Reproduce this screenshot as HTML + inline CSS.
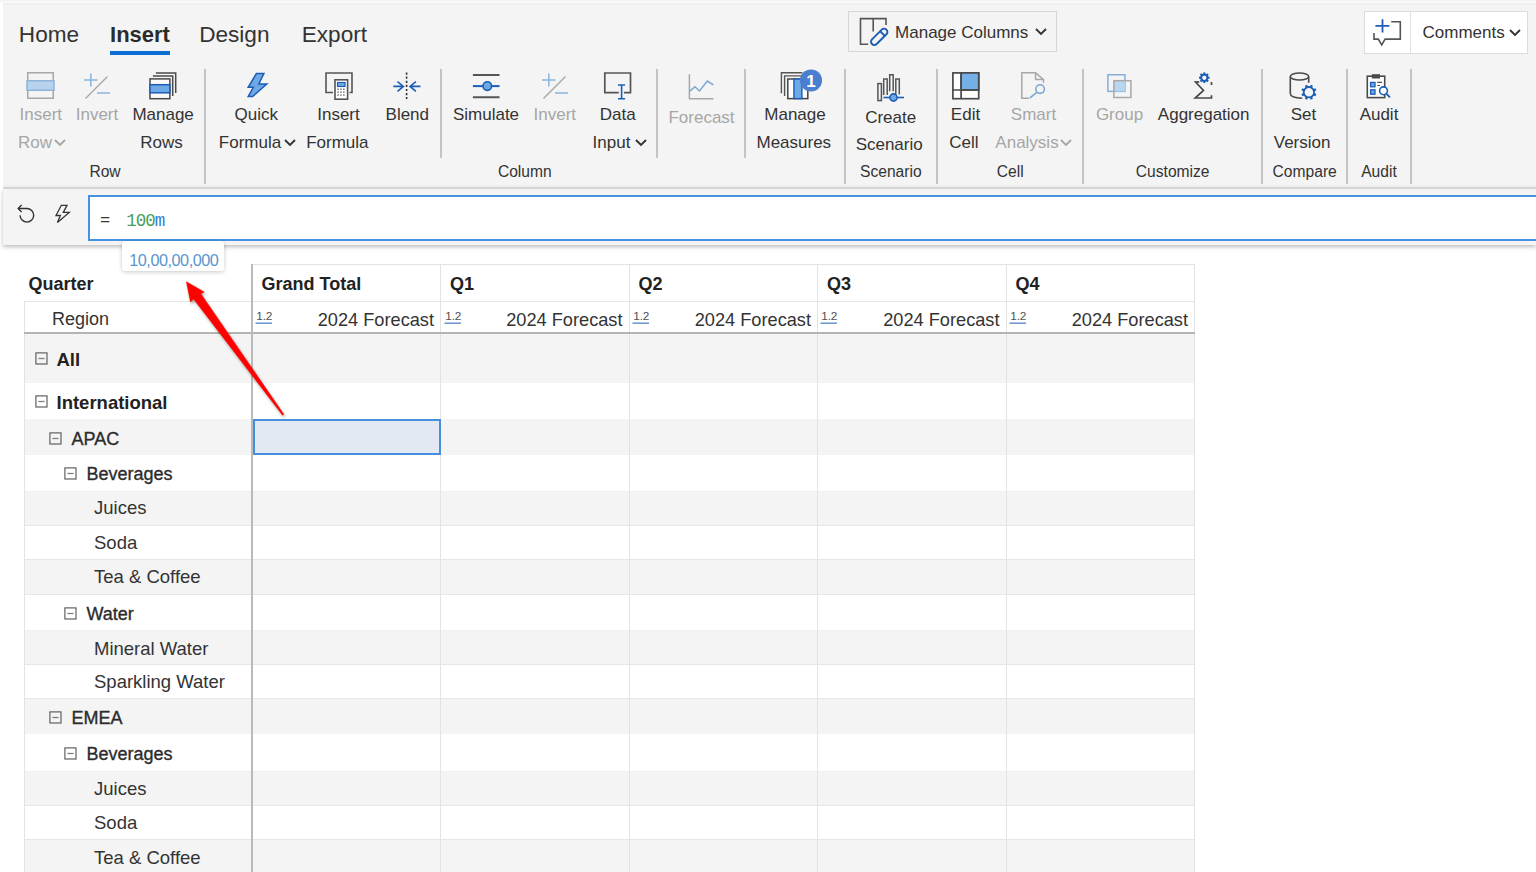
<!DOCTYPE html>
<html><head><meta charset="utf-8"><style>
html,body{margin:0;padding:0;}
body{width:1536px;height:872px;overflow:hidden;position:relative;background:#fff;font-family:"Liberation Sans",sans-serif;color:#333;}
.t{position:absolute;white-space:nowrap;line-height:1;}
</style></head><body>
<div style="position:absolute;left:0;top:0;width:1536px;height:1px;background:#f4f4f4"></div><div style="position:absolute;left:0;top:1px;width:1536px;height:2px;background:#f9f9f9"></div>
<div style="position:absolute;left:3px;top:3px;width:1533px;height:185px;background:#f4f4f4;"></div>
<div style="position:absolute;left:3px;top:3px;width:1533px;height:2px;background:#f0f0f0;"></div>
<div style="position:absolute;left:3px;top:184px;width:1533px;height:3px;background:linear-gradient(#f4f4f4,#ececec);"></div>
<div style="position:absolute;left:3px;top:187px;width:1533px;height:2px;background:#d9d9d9;"></div>
<div class="t" style="top:24px;font-size:22.6px;left:-101.00px;width:300px;text-align:center;">Home</div>
<div class="t" style="top:24px;font-size:22px;font-weight:700;color:#2b2b2b;left:-10.00px;width:300px;text-align:center;">Insert</div>
<div class="t" style="top:24px;font-size:22.6px;left:84.30px;width:300px;text-align:center;">Design</div>
<div class="t" style="top:24px;font-size:22.6px;left:184.40px;width:300px;text-align:center;">Export</div>
<div style="position:absolute;left:110px;top:51px;width:60px;height:4px;background:#0b6fd6;"></div>
<div style="position:absolute;left:848px;top:11px;width:209px;height:41px;border:1px solid #d6d6d6;box-sizing:border-box;"></div>
<svg style="position:absolute;left:860px;top:18px;overflow:visible" width="28" height="28" viewBox="0 0 28 28"><path d="M8.2 26.2 H0.5 V0.6 H26 V7" fill="none" stroke="#555555" stroke-width="1.6"/><path d="M13.2 0.6 V13.4" stroke="#555555" stroke-width="1.6"/><g transform="translate(19.2 18.8) rotate(-45)"><rect x="-10.2" y="-3.3" width="20.4" height="6.6" rx="3.3" fill="none" stroke="#1c5db5" stroke-width="1.9"/><path d="M4.6 -3.3 V3.3" stroke="#1c5db5" stroke-width="1.9"/></g></svg>
<div class="t" style="top:24px;font-size:17px;left:811.70px;width:300px;text-align:center;">Manage Columns</div>
<svg style="position:absolute;left:1035px;top:28px;overflow:visible" width="12" height="7" viewBox="0 0 12 7"><path d="M1 1 L6 6 L11 1" fill="none" stroke="#333333" stroke-width="1.9"/></svg>
<div style="position:absolute;left:1364px;top:11px;width:164px;height:43px;background:#fff;border:1px solid #dcdcdc;box-sizing:border-box;"></div>
<div style="position:absolute;left:1410px;top:12px;width:1px;height:41px;background:#e0e0e0;"></div>
<svg style="position:absolute;left:1373px;top:19px;overflow:visible" width="28" height="27" viewBox="0 0 28 27"><path d="M1 13.9 V20.1 H5.3 L8.7 26 L12.1 20.1 H27.3 V2.7 H18.2" fill="none" stroke="#555555" stroke-width="1.6"/><path d="M9.5 0.3 V13.6 M2.4 6.8 H16.4" stroke="#1c5db5" stroke-width="1.8"/></svg>
<div class="t" style="top:24px;font-size:17px;left:1313.60px;width:300px;text-align:center;">Comments</div>
<svg style="position:absolute;left:1509px;top:29px;overflow:visible" width="12" height="7" viewBox="0 0 12 7"><path d="M1 1 L6 6 L11 1" fill="none" stroke="#333333" stroke-width="1.9"/></svg>
<div style="position:absolute;left:204px;top:69px;width:2px;height:115px;background:#c4c4c4;"></div>
<div style="position:absolute;left:440px;top:69px;width:2px;height:89px;background:#c4c4c4;"></div>
<div style="position:absolute;left:656px;top:69px;width:2px;height:89px;background:#c4c4c4;"></div>
<div style="position:absolute;left:744px;top:69px;width:2px;height:89px;background:#c4c4c4;"></div>
<div style="position:absolute;left:844px;top:69px;width:2px;height:115px;background:#c4c4c4;"></div>
<div style="position:absolute;left:936px;top:69px;width:2px;height:115px;background:#c4c4c4;"></div>
<div style="position:absolute;left:1082px;top:69px;width:2px;height:115px;background:#c4c4c4;"></div>
<div style="position:absolute;left:1261px;top:69px;width:2px;height:115px;background:#c4c4c4;"></div>
<div style="position:absolute;left:1346px;top:69px;width:2px;height:115px;background:#c4c4c4;"></div>
<div style="position:absolute;left:1410px;top:69px;width:2px;height:115px;background:#c4c4c4;"></div>
<svg style="position:absolute;left:27px;top:72px;overflow:visible" width="27" height="27" viewBox="0 0 27 27"><rect x="0.75" y="0.75" width="25.5" height="25.5" fill="none" stroke="#a8a8a8" stroke-width="1.5"/><rect x="0" y="8.75" width="27" height="9.5" fill="#b7d3ee" stroke="#8fb3db" stroke-width="1.5"/></svg>
<div class="t" style="top:106px;font-size:17px;color:#a6a6a6;left:-109.20px;width:300px;text-align:center;">Insert</div>
<div class="t" style="top:134px;font-size:17px;color:#a6a6a6;left:-115.00px;width:300px;text-align:center;">Row</div>
<svg style="position:absolute;left:53.5px;top:139px;overflow:visible" width="12" height="7" viewBox="0 0 12 7"><path d="M1 1 L6 6 L11 1" fill="none" stroke="#a6a6a6" stroke-width="1.9"/></svg>
<svg style="position:absolute;left:84px;top:73px;overflow:visible" width="27" height="26" viewBox="0 0 27 26"><path d="M6.8 0.5 V13.5 M0 7 H13.5" stroke="#8db4dd" stroke-width="1.5"/><path d="M1.5 25.5 L23.5 3.5" stroke="#a8a8a8" stroke-width="1.5"/><path d="M13 20 H26" stroke="#8db4dd" stroke-width="1.5"/></svg>
<div class="t" style="top:106px;font-size:17px;color:#a6a6a6;left:-53.00px;width:300px;text-align:center;">Invert</div>
<svg style="position:absolute;left:149px;top:72px;overflow:visible" width="28" height="28" viewBox="0 0 28 28"><path d="M3.9 4 H23.7 V24 M6.9 1 H26.7 V21" fill="none" stroke="#4a4a4a" stroke-width="1.5"/><rect x="1" y="6.9" width="19.85" height="19.8" fill="#fafafa" stroke="#4a4a4a" stroke-width="1.5"/><rect x="1" y="12.7" width="19.85" height="8.1" fill="#6ea8e6" stroke="#1c5db5" stroke-width="1.5"/></svg>
<div class="t" style="top:106px;font-size:17px;left:13.10px;width:300px;text-align:center;">Manage</div>
<div class="t" style="top:134px;font-size:17px;left:11.50px;width:300px;text-align:center;">Rows</div>
<div class="t" style="top:164px;font-size:15.6px;left:-45.00px;width:300px;text-align:center;">Row</div>
<svg style="position:absolute;left:247px;top:73px;overflow:visible" width="21" height="25" viewBox="0 0 21 25"><path d="M9.4 0.6 H16.9 L11.8 11 H19.8 L5.6 23.6 H1.2 L6.3 14.3 H1.2 Z" fill="#6ea8e6" stroke="#1c5db5" stroke-width="1.5" stroke-linejoin="miter"/></svg>
<div class="t" style="top:106px;font-size:17px;left:106.20px;width:300px;text-align:center;">Quick</div>
<div class="t" style="top:134px;font-size:17px;left:100.00px;width:300px;text-align:center;">Formula</div>
<svg style="position:absolute;left:284px;top:139px;overflow:visible" width="12" height="7" viewBox="0 0 12 7"><path d="M1 1 L6 6 L11 1" fill="none" stroke="#333333" stroke-width="1.9"/></svg>
<svg style="position:absolute;left:325px;top:72px;overflow:visible" width="28" height="28" viewBox="0 0 28 28"><path d="M8 20.5 H1 V1 H27 V20.5 H24.5" fill="none" stroke="#555555" stroke-width="1.6"/><rect x="10" y="7.8" width="12.6" height="19.4" fill="#fff" stroke="#555555" stroke-width="1.6"/><rect x="12.5" y="10.5" width="7.5" height="4" fill="#6ea8e6" stroke="#1c5db5" stroke-width="1.2"/><rect x="12.3" y="16.5" width="1.5" height="1.5" fill="#777"/><rect x="12.3" y="19.4" width="1.5" height="1.5" fill="#777"/><rect x="12.3" y="22.3" width="1.5" height="1.5" fill="#777"/><rect x="15.2" y="16.5" width="1.5" height="1.5" fill="#777"/><rect x="15.2" y="19.4" width="1.5" height="1.5" fill="#777"/><rect x="15.2" y="22.3" width="1.5" height="1.5" fill="#777"/><rect x="18.1" y="16.5" width="1.5" height="1.5" fill="#777"/><rect x="18.1" y="19.4" width="1.5" height="1.5" fill="#777"/><rect x="18.1" y="22.3" width="1.5" height="1.5" fill="#777"/></svg>
<div class="t" style="top:106px;font-size:17px;left:188.50px;width:300px;text-align:center;">Insert</div>
<div class="t" style="top:134px;font-size:17px;left:187.40px;width:300px;text-align:center;">Formula</div>
<svg style="position:absolute;left:393px;top:72px;overflow:visible" width="28" height="28" viewBox="0 0 28 28"><path d="M13.6 0.5 V27" stroke="#333" stroke-width="1.6" stroke-dasharray="2.2 1.9"/><path d="M0.3 14.4 H10.4 M4.5 9.7 L10.4 14.4 L4.5 19.4" fill="none" stroke="#1c5db5" stroke-width="1.6"/><path d="M17 14.4 H27.5 M22.9 9.7 L17 14.4 L22.9 19.4" fill="none" stroke="#1c5db5" stroke-width="1.6"/></svg>
<div class="t" style="top:106px;font-size:17px;left:257.30px;width:300px;text-align:center;">Blend</div>
<svg style="position:absolute;left:472px;top:73px;overflow:visible" width="28" height="26" viewBox="0 0 28 26"><path d="M0.9 1.9 H27.5 M0.9 24.3 H27.5" stroke="#555" stroke-width="2"/><path d="M0.9 13.1 H27.5" stroke="#1c5db5" stroke-width="2"/><circle cx="15.3" cy="13.1" r="4.3" fill="#6ea8e6" stroke="#1c5db5" stroke-width="1.6"/></svg>
<div class="t" style="top:106px;font-size:17px;left:336.00px;width:300px;text-align:center;">Simulate</div>
<svg style="position:absolute;left:542px;top:73px;overflow:visible" width="27" height="26" viewBox="0 0 27 26"><path d="M6.8 0.5 V13.5 M0 7 H13.5" stroke="#8db4dd" stroke-width="1.5"/><path d="M1.5 25.5 L23.5 3.5" stroke="#a8a8a8" stroke-width="1.5"/><path d="M13 20 H26" stroke="#8db4dd" stroke-width="1.5"/></svg>
<div class="t" style="top:106px;font-size:17px;color:#a6a6a6;left:404.80px;width:300px;text-align:center;">Invert</div>
<svg style="position:absolute;left:604px;top:72px;overflow:visible" width="28" height="28" viewBox="0 0 28 28"><path d="M14.8 20.6 H0.8 V1 H26.5 V20.6 H19.9" fill="none" stroke="#555555" stroke-width="1.7"/><path d="M17.6 13 V26.7 M14 13 H21.1 M14 26.7 H21.1" stroke="#1c5db5" stroke-width="1.6"/></svg>
<div class="t" style="top:106px;font-size:17px;left:467.70px;width:300px;text-align:center;">Data</div>
<div class="t" style="top:134px;font-size:17px;left:461.50px;width:300px;text-align:center;">Input</div>
<svg style="position:absolute;left:634.5px;top:139px;overflow:visible" width="12" height="7" viewBox="0 0 12 7"><path d="M1 1 L6 6 L11 1" fill="none" stroke="#333333" stroke-width="1.9"/></svg>
<div class="t" style="top:164px;font-size:15.6px;left:374.80px;width:300px;text-align:center;">Column</div>
<svg style="position:absolute;left:688px;top:74px;overflow:visible" width="27" height="26" viewBox="0 0 27 26"><path d="M1.4 0.2 V24.7 H25.4" fill="none" stroke="#a8a8a8" stroke-width="1.5"/><path d="M1.5 17.4 L7 12.7 L11.5 17 L19.3 7 L25.4 10.9" fill="none" stroke="#7aa7d6" stroke-width="1.5"/></svg>
<div class="t" style="top:109px;font-size:17px;color:#a6a6a6;left:551.50px;width:300px;text-align:center;">Forecast</div>
<svg style="position:absolute;left:781px;top:69px;overflow:visible" width="42" height="31" viewBox="0 0 42 31"><path d="M0.4 24.2 V3.7 H21.4" fill="none" stroke="#555" stroke-width="1.4"/><path d="M3.6 26.9 V6.9 H21.4" fill="none" stroke="#555" stroke-width="1.4"/><rect x="6.8" y="10" width="20" height="19.6" fill="#fff" stroke="#444" stroke-width="1.5"/><rect x="12.9" y="10" width="8" height="19.6" fill="#6ea8e6" stroke="#1c5db5" stroke-width="1.4"/><circle cx="30" cy="11.4" r="11" fill="#4a7ecf"/><text x="30" y="17.6" text-anchor="middle" font-family="Liberation Sans" font-weight="700" font-size="17" fill="#fff">1</text></svg>
<div class="t" style="top:106px;font-size:17px;left:645.00px;width:300px;text-align:center;">Manage</div>
<div class="t" style="top:134px;font-size:17px;left:643.80px;width:300px;text-align:center;">Measures</div>
<svg style="position:absolute;left:877px;top:73px;overflow:visible" width="28" height="29" viewBox="0 0 28 29"><rect x="0.9" y="10.6" width="3.5" height="17" fill="none" stroke="#555" stroke-width="1.5"/><path d="M6.7 22 V6.1 H10.2 V22 M12.7 18.3 V1.7 H16.2 V18.3 M18.8 21.5 V6.1 H22.3 V21.5" fill="none" stroke="#555" stroke-width="1.5"/><path d="M6.5 24.5 H27" stroke="#1c5db5" stroke-width="1.6"/><circle cx="16.5" cy="24.5" r="3.6" fill="#6ea8e6" stroke="#1c5db5" stroke-width="1.6"/></svg>
<div class="t" style="top:109px;font-size:17px;left:740.70px;width:300px;text-align:center;">Create</div>
<div class="t" style="top:136px;font-size:17px;left:739.20px;width:300px;text-align:center;">Scenario</div>
<div class="t" style="top:164px;font-size:15.6px;left:740.80px;width:300px;text-align:center;">Scenario</div>
<svg style="position:absolute;left:952px;top:72px;overflow:visible" width="28" height="28" viewBox="0 0 28 28"><rect x="0.9" y="0.9" width="25.8" height="25.8" fill="#fff" stroke="#4a4a4a" stroke-width="1.7"/><rect x="9.1" y="0.9" width="17.6" height="17.1" fill="#74b0e8" stroke="#4a4a4a" stroke-width="1.7"/><path d="M0.9 18 H26.7 M9.1 0.9 V26.7" stroke="#4a4a4a" stroke-width="1.7"/></svg>
<div class="t" style="top:106px;font-size:17px;left:815.50px;width:300px;text-align:center;">Edit</div>
<div class="t" style="top:134px;font-size:17px;left:813.90px;width:300px;text-align:center;">Cell</div>
<svg style="position:absolute;left:1021px;top:72px;overflow:visible" width="27" height="28" viewBox="0 0 27 28"><path d="M8.2 26.2 H0.8 V0.8 H14.6 L22.5 7.6 V10.8 M14.6 0.8 V7.6 H22.5" fill="none" stroke="#a8a8a8" stroke-width="1.5"/><circle cx="19.1" cy="17.1" r="4.3" fill="none" stroke="#7aa7d6" stroke-width="1.6"/><path d="M15.8 20.3 L9 25.9" stroke="#7aa7d6" stroke-width="1.6"/></svg>
<div class="t" style="top:106px;font-size:17px;color:#a6a6a6;left:883.50px;width:300px;text-align:center;">Smart</div>
<div class="t" style="top:134px;font-size:17px;color:#a6a6a6;left:877.00px;width:300px;text-align:center;">Analysis</div>
<svg style="position:absolute;left:1060px;top:139px;overflow:visible" width="12" height="7" viewBox="0 0 12 7"><path d="M1 1 L6 6 L11 1" fill="none" stroke="#a6a6a6" stroke-width="1.9"/></svg>
<div class="t" style="top:164px;font-size:15.6px;left:860.30px;width:300px;text-align:center;">Cell</div>
<svg style="position:absolute;left:1107px;top:74px;overflow:visible" width="25" height="25" viewBox="0 0 25 25"><rect x="0.9" y="0.75" width="17" height="16.6" fill="none" stroke="#86aedb" stroke-width="1.5"/><rect x="6.5" y="6.6" width="11.4" height="10.8" fill="#b8d5f1"/><rect x="6.9" y="6.7" width="17" height="16.8" fill="none" stroke="#a8a8a8" stroke-width="1.5"/></svg>
<div class="t" style="top:106px;font-size:17px;color:#a6a6a6;left:969.50px;width:300px;text-align:center;">Group</div>
<svg style="position:absolute;left:1194px;top:72px;overflow:visible" width="20" height="28" viewBox="0 0 20 28"><path d="M5.2 9.8 L1.5 10 L9.5 18.4 L1.2 26 H17.5 V23.3 M17.5 10 V13" fill="none" stroke="#4a4a4a" stroke-width="1.7"/><g transform="translate(10.3 5.7)"><rect x="-1" y="-5.3" width="2" height="3" fill="#1c5db5" transform="rotate(0)"/><rect x="-1" y="-5.3" width="2" height="3" fill="#1c5db5" transform="rotate(45)"/><rect x="-1" y="-5.3" width="2" height="3" fill="#1c5db5" transform="rotate(90)"/><rect x="-1" y="-5.3" width="2" height="3" fill="#1c5db5" transform="rotate(135)"/><rect x="-1" y="-5.3" width="2" height="3" fill="#1c5db5" transform="rotate(180)"/><rect x="-1" y="-5.3" width="2" height="3" fill="#1c5db5" transform="rotate(225)"/><rect x="-1" y="-5.3" width="2" height="3" fill="#1c5db5" transform="rotate(270)"/><rect x="-1" y="-5.3" width="2" height="3" fill="#1c5db5" transform="rotate(315)"/><circle r="3.2" fill="none" stroke="#1c5db5" stroke-width="1.9"/></g></svg>
<div class="t" style="top:106px;font-size:17px;left:1053.70px;width:300px;text-align:center;">Aggregation</div>
<div class="t" style="top:164px;font-size:15.6px;left:1022.70px;width:300px;text-align:center;">Customize</div>
<svg style="position:absolute;left:1290px;top:72px;overflow:visible" width="28" height="28" viewBox="0 0 28 28"><ellipse cx="9.5" cy="4.5" rx="9.2" ry="3.5" fill="none" stroke="#4a4a4a" stroke-width="1.6"/><path d="M0.3 4.5 V21.5 Q0.5 26 12.2 26.2 M18.7 4.5 V10.8" fill="none" stroke="#4a4a4a" stroke-width="1.6"/><g transform="translate(18.9 20.2)"><rect x="-1.2" y="-7.6" width="2.4" height="3.2" fill="#1c5db5" transform="rotate(22.5)"/><rect x="-1.2" y="-7.6" width="2.4" height="3.2" fill="#1c5db5" transform="rotate(67.5)"/><rect x="-1.2" y="-7.6" width="2.4" height="3.2" fill="#1c5db5" transform="rotate(112.5)"/><rect x="-1.2" y="-7.6" width="2.4" height="3.2" fill="#1c5db5" transform="rotate(157.5)"/><rect x="-1.2" y="-7.6" width="2.4" height="3.2" fill="#1c5db5" transform="rotate(202.5)"/><rect x="-1.2" y="-7.6" width="2.4" height="3.2" fill="#1c5db5" transform="rotate(247.5)"/><rect x="-1.2" y="-7.6" width="2.4" height="3.2" fill="#1c5db5" transform="rotate(292.5)"/><rect x="-1.2" y="-7.6" width="2.4" height="3.2" fill="#1c5db5" transform="rotate(337.5)"/><circle r="5.2" fill="#f4f4f4" stroke="#1c5db5" stroke-width="1.8"/></g></svg>
<div class="t" style="top:106px;font-size:17px;left:1153.40px;width:300px;text-align:center;">Set</div>
<div class="t" style="top:134px;font-size:17px;left:1152.10px;width:300px;text-align:center;">Version</div>
<div class="t" style="top:164px;font-size:15.6px;left:1154.70px;width:300px;text-align:center;">Compare</div>
<svg style="position:absolute;left:1366px;top:73px;overflow:visible" width="26" height="26" viewBox="0 0 26 26"><rect x="1.3" y="3.2" width="17.4" height="21.4" fill="#fff" stroke="#4a4a4a" stroke-width="1.6"/><rect x="5.8" y="1.2" width="8.2" height="4.3" fill="#4a4a4a"/><rect x="4.6" y="9.4" width="4.4" height="4.4" fill="#6ea8e6" stroke="#1c5db5" stroke-width="1.3"/><rect x="4.6" y="16.8" width="4.4" height="4.4" fill="#6ea8e6" stroke="#1c5db5" stroke-width="1.3"/><path d="M11.3 9.4 H16 M11.3 12.5 H14" stroke="#4a4a4a" stroke-width="1.2"/><circle cx="17.5" cy="17.8" r="3.9" fill="#fff" stroke="#1c5db5" stroke-width="1.6"/><path d="M20.3 20.6 L24 24.3" stroke="#1c5db5" stroke-width="1.8"/></svg>
<div class="t" style="top:106px;font-size:17px;left:1229.00px;width:300px;text-align:center;">Audit</div>
<div class="t" style="top:164px;font-size:15.6px;left:1229.00px;width:300px;text-align:center;">Audit</div>
<div style="position:absolute;left:3px;top:189px;width:1533px;height:56px;background:#f4f4f4;box-shadow:0 2px 4px rgba(0,0,0,0.26);"></div>
<svg style="position:absolute;left:17px;top:204px;overflow:visible" width="19" height="20" viewBox="0 0 19 20"><path d="M1 4.5 H9.9 A6.8 6.8 0 1 1 3.1 11.3" fill="none" stroke="#333" stroke-width="1.4"/><path d="M4.6 1.1 L1.2 4.5 L4.6 8.1" fill="none" stroke="#333" stroke-width="1.4"/></svg>
<svg style="position:absolute;left:55px;top:204px;overflow:visible" width="16" height="20" viewBox="0 0 16 20"><path d="M6.3 1.3 H12 L8.3 8.4 H14.25 L2.4 18.6 L5.4 11.5 H1 Z" fill="none" stroke="#333" stroke-width="1.3" stroke-linejoin="miter"/></svg>
<div style="position:absolute;left:88px;top:195px;width:1460px;height:46px;background:#fff;border:2px solid #4492e0;box-sizing:border-box;"></div>
<div class="t" style="top:212px;font-size:17px;font-family:'Liberation Mono';left:100.00px;">=</div>
<div class="t" style="top:213px;font-size:17.5px;font-family:'Liberation Mono';left:126.30px;letter-spacing:-1px;"><span style="color:#4a9e5c">100</span><span style="color:#2a7fd4">m</span></div>
<div style="position:absolute;left:24px;top:333px;width:1170px;height:50px;background:#f4f4f4;"></div>
<div style="position:absolute;left:24px;top:383px;width:1170px;height:36px;background:#ffffff;"></div>
<div style="position:absolute;left:24px;top:419px;width:1170px;height:36px;background:#f4f4f4;"></div>
<div style="position:absolute;left:24px;top:455px;width:1170px;height:36px;background:#ffffff;"></div>
<div style="position:absolute;left:24px;top:491px;width:1170px;height:34px;background:#f4f4f4;"></div>
<div style="position:absolute;left:24px;top:525px;width:1170px;height:34px;background:#ffffff;"></div>
<div style="position:absolute;left:24px;top:559px;width:1170px;height:35px;background:#f4f4f4;"></div>
<div style="position:absolute;left:24px;top:594px;width:1170px;height:36px;background:#ffffff;"></div>
<div style="position:absolute;left:24px;top:630px;width:1170px;height:34px;background:#f4f4f4;"></div>
<div style="position:absolute;left:24px;top:664px;width:1170px;height:34px;background:#ffffff;"></div>
<div style="position:absolute;left:24px;top:698px;width:1170px;height:36px;background:#f4f4f4;"></div>
<div style="position:absolute;left:24px;top:734px;width:1170px;height:37px;background:#ffffff;"></div>
<div style="position:absolute;left:24px;top:771px;width:1170px;height:34px;background:#f4f4f4;"></div>
<div style="position:absolute;left:24px;top:805px;width:1170px;height:34px;background:#ffffff;"></div>
<div style="position:absolute;left:24px;top:839px;width:1170px;height:34px;background:#f4f4f4;"></div>
<div style="position:absolute;left:24px;top:525px;width:1170px;height:1px;background:#e6e6e6;"></div>
<div style="position:absolute;left:24px;top:559px;width:1170px;height:1px;background:#e6e6e6;"></div>
<div style="position:absolute;left:24px;top:594px;width:1170px;height:1px;background:#e6e6e6;"></div>
<div style="position:absolute;left:24px;top:664px;width:1170px;height:1px;background:#e6e6e6;"></div>
<div style="position:absolute;left:24px;top:698px;width:1170px;height:1px;background:#e6e6e6;"></div>
<div style="position:absolute;left:24px;top:805px;width:1170px;height:1px;background:#e6e6e6;"></div>
<div style="position:absolute;left:24px;top:839px;width:1170px;height:1px;background:#e6e6e6;"></div>
<div style="position:absolute;left:24px;top:491px;width:1170px;height:1px;background:#f0f0f0;"></div>
<div style="position:absolute;left:24px;top:630px;width:1170px;height:1px;background:#f0f0f0;"></div>
<div style="position:absolute;left:24px;top:771px;width:1170px;height:1px;background:#f0f0f0;"></div>
<div style="position:absolute;left:252px;top:264px;width:943px;height:69px;background:#fff;"></div>
<div style="position:absolute;left:24px;top:301px;width:228px;height:32px;background:#fff;"></div>
<div style="position:absolute;left:252px;top:264px;width:943px;height:1px;background:#e3e3e3;"></div>
<div style="position:absolute;left:24px;top:301px;width:1171px;height:1px;background:#e6e6e6;"></div>
<div style="position:absolute;left:24px;top:301px;width:1px;height:572px;background:#e3e3e3;"></div>
<div style="position:absolute;left:440px;top:264px;width:1px;height:609px;background:#e3e3e3;"></div>
<div style="position:absolute;left:629px;top:264px;width:1px;height:609px;background:#e3e3e3;"></div>
<div style="position:absolute;left:817px;top:264px;width:1px;height:609px;background:#e3e3e3;"></div>
<div style="position:absolute;left:1006px;top:264px;width:1px;height:609px;background:#e3e3e3;"></div>
<div style="position:absolute;left:1194px;top:264px;width:1px;height:609px;background:#e3e3e3;"></div>
<div style="position:absolute;left:24px;top:332px;width:1171px;height:2px;background:#b4b4b4;"></div>
<div style="position:absolute;left:251px;top:264px;width:2px;height:609px;background:#bababa;"></div>
<div style="position:absolute;left:253px;top:419px;width:188px;height:36px;background:#e2e9f3;border:2px solid #4590dc;box-sizing:border-box;"></div>
<div class="t" style="top:275px;font-size:18px;font-weight:700;color:#222;left:28.50px;">Quarter</div>
<div class="t" style="top:310px;font-size:18px;left:52.00px;">Region</div>
<div class="t" style="top:275px;font-size:18px;font-weight:700;color:#222;left:261.50px;">Grand Total</div>
<svg style="position:absolute;left:255px;top:310px;overflow:visible" width="18" height="14" viewBox="0 0 18 14"><text x="1.3" y="10.1" font-family="Liberation Sans" font-size="11.8" fill="#505050" letter-spacing="-0.2">1.2</text><path d="M0.5 13.2 H17" stroke="#6f9bd0" stroke-width="1.6"/></svg>
<div class="t" style="top:311px;font-size:18.2px;left:234.00px;width:200px;text-align:right;">2024 Forecast</div>
<div class="t" style="top:275px;font-size:18px;font-weight:700;color:#222;left:450.00px;">Q1</div>
<svg style="position:absolute;left:444px;top:310px;overflow:visible" width="18" height="14" viewBox="0 0 18 14"><text x="1.3" y="10.1" font-family="Liberation Sans" font-size="11.8" fill="#505050" letter-spacing="-0.2">1.2</text><path d="M0.5 13.2 H17" stroke="#6f9bd0" stroke-width="1.6"/></svg>
<div class="t" style="top:311px;font-size:18.2px;left:422.50px;width:200px;text-align:right;">2024 Forecast</div>
<div class="t" style="top:275px;font-size:18px;font-weight:700;color:#222;left:638.50px;">Q2</div>
<svg style="position:absolute;left:632px;top:310px;overflow:visible" width="18" height="14" viewBox="0 0 18 14"><text x="1.3" y="10.1" font-family="Liberation Sans" font-size="11.8" fill="#505050" letter-spacing="-0.2">1.2</text><path d="M0.5 13.2 H17" stroke="#6f9bd0" stroke-width="1.6"/></svg>
<div class="t" style="top:311px;font-size:18.2px;left:611.00px;width:200px;text-align:right;">2024 Forecast</div>
<div class="t" style="top:275px;font-size:18px;font-weight:700;color:#222;left:827.00px;">Q3</div>
<svg style="position:absolute;left:820px;top:310px;overflow:visible" width="18" height="14" viewBox="0 0 18 14"><text x="1.3" y="10.1" font-family="Liberation Sans" font-size="11.8" fill="#505050" letter-spacing="-0.2">1.2</text><path d="M0.5 13.2 H17" stroke="#6f9bd0" stroke-width="1.6"/></svg>
<div class="t" style="top:311px;font-size:18.2px;left:799.50px;width:200px;text-align:right;">2024 Forecast</div>
<div class="t" style="top:275px;font-size:18px;font-weight:700;color:#222;left:1015.50px;">Q4</div>
<svg style="position:absolute;left:1009px;top:310px;overflow:visible" width="18" height="14" viewBox="0 0 18 14"><text x="1.3" y="10.1" font-family="Liberation Sans" font-size="11.8" fill="#505050" letter-spacing="-0.2">1.2</text><path d="M0.5 13.2 H17" stroke="#6f9bd0" stroke-width="1.6"/></svg>
<div class="t" style="top:311px;font-size:18.2px;left:988.00px;width:200px;text-align:right;">2024 Forecast</div>
<svg style="position:absolute;left:34.5px;top:352.3px;overflow:visible" width="13" height="13" viewBox="0 0 13 13"><rect x="0.9" y="0.9" width="11.1" height="11.1" fill="none" stroke="#5a5a5a" stroke-width="1.15"/><path d="M3.4 6.5 H9.6" stroke="#808080" stroke-width="1.3"/></svg>
<div class="t" style="top:351px;font-size:18.5px;font-weight:700;color:#222;left:56.50px;">All</div>
<svg style="position:absolute;left:34.5px;top:395.2px;overflow:visible" width="13" height="13" viewBox="0 0 13 13"><rect x="0.9" y="0.9" width="11.1" height="11.1" fill="none" stroke="#5a5a5a" stroke-width="1.15"/><path d="M3.4 6.5 H9.6" stroke="#808080" stroke-width="1.3"/></svg>
<div class="t" style="top:394px;font-size:18.5px;font-weight:700;color:#222;left:56.50px;">International</div>
<svg style="position:absolute;left:49px;top:431.7px;overflow:visible" width="13" height="13" viewBox="0 0 13 13"><rect x="0.9" y="0.9" width="11.1" height="11.1" fill="none" stroke="#5a5a5a" stroke-width="1.15"/><path d="M3.4 6.5 H9.6" stroke="#808080" stroke-width="1.3"/></svg>
<div class="t" style="top:430px;font-size:18px;color:#2a2a2a;left:71.50px;-webkit-text-stroke:0.35px #333;">APAC</div>
<svg style="position:absolute;left:64px;top:466.7px;overflow:visible" width="13" height="13" viewBox="0 0 13 13"><rect x="0.9" y="0.9" width="11.1" height="11.1" fill="none" stroke="#5a5a5a" stroke-width="1.15"/><path d="M3.4 6.5 H9.6" stroke="#808080" stroke-width="1.3"/></svg>
<div class="t" style="top:465px;font-size:18px;color:#2a2a2a;left:86.50px;-webkit-text-stroke:0.35px #333;">Beverages</div>
<div class="t" style="top:499px;font-size:18.5px;left:94.00px;">Juices</div>
<div class="t" style="top:534px;font-size:18.5px;left:94.00px;">Soda</div>
<div class="t" style="top:568px;font-size:18.5px;left:94.00px;">Tea &amp; Coffee</div>
<svg style="position:absolute;left:64px;top:606.8px;overflow:visible" width="13" height="13" viewBox="0 0 13 13"><rect x="0.9" y="0.9" width="11.1" height="11.1" fill="none" stroke="#5a5a5a" stroke-width="1.15"/><path d="M3.4 6.5 H9.6" stroke="#808080" stroke-width="1.3"/></svg>
<div class="t" style="top:605px;font-size:18px;color:#2a2a2a;left:86.50px;-webkit-text-stroke:0.35px #333;">Water</div>
<div class="t" style="top:640px;font-size:18.5px;left:94.00px;">Mineral Water</div>
<div class="t" style="top:673px;font-size:18.5px;left:94.00px;">Sparkling Water</div>
<svg style="position:absolute;left:49px;top:710.6px;overflow:visible" width="13" height="13" viewBox="0 0 13 13"><rect x="0.9" y="0.9" width="11.1" height="11.1" fill="none" stroke="#5a5a5a" stroke-width="1.15"/><path d="M3.4 6.5 H9.6" stroke="#808080" stroke-width="1.3"/></svg>
<div class="t" style="top:709px;font-size:18px;color:#2a2a2a;left:71.50px;-webkit-text-stroke:0.35px #333;">EMEA</div>
<svg style="position:absolute;left:64px;top:746.9px;overflow:visible" width="13" height="13" viewBox="0 0 13 13"><rect x="0.9" y="0.9" width="11.1" height="11.1" fill="none" stroke="#5a5a5a" stroke-width="1.15"/><path d="M3.4 6.5 H9.6" stroke="#808080" stroke-width="1.3"/></svg>
<div class="t" style="top:745px;font-size:18px;color:#2a2a2a;left:86.50px;-webkit-text-stroke:0.35px #333;">Beverages</div>
<div class="t" style="top:780px;font-size:18.5px;left:94.00px;">Juices</div>
<div class="t" style="top:814px;font-size:18.5px;left:94.00px;">Soda</div>
<div class="t" style="top:849px;font-size:18.5px;left:94.00px;">Tea &amp; Coffee</div>
<div style="position:absolute;left:122px;top:241px;width:102px;height:30px;background:#fff;border-radius:3px;box-shadow:0 1px 4px rgba(0,0,0,0.22);"></div>
<div class="t" style="top:252px;font-size:16.2px;color:#5a96cc;left:23.80px;width:300px;text-align:center;letter-spacing:-0.45px;">10,00,00,000</div>
<svg style="position:absolute;left:180px;top:275px;overflow:visible" width="110" height="145" viewBox="0 0 110 145"><path d="M6.4 6.7 L24.25 17 L20.8 18.7 L103.8 139.3 L102.6 140.3 L13.6 23.9 L10.5 27 Z" fill="#ff0000" stroke="#ff0000" stroke-width="0.5" stroke-linejoin="round" style="filter:drop-shadow(1.5px 2px 1.5px rgba(0,0,0,0.35))"/></svg>
</body></html>
